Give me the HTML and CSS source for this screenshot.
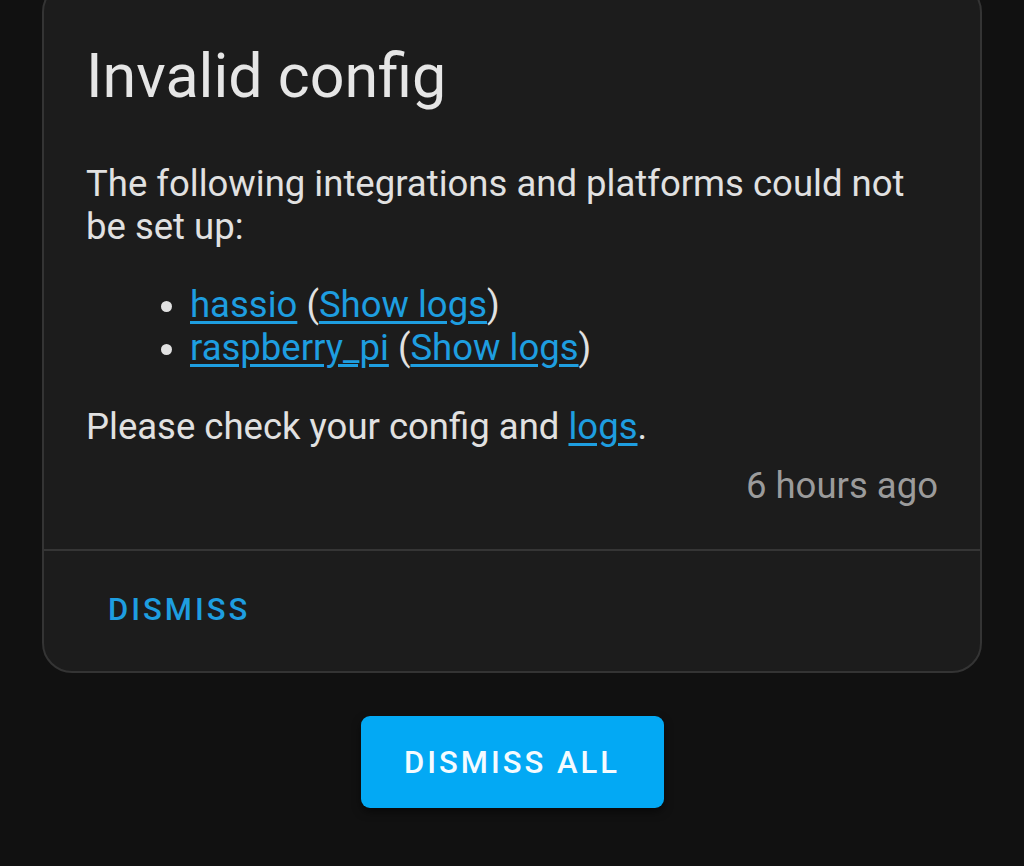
FILE: index.html
```html
<!DOCTYPE html>
<html>
<head>
<meta charset="utf-8">
<link rel="stylesheet" href="styles.css">
</head>
<body>
<div class="page">
  <div class="card">
    <div class="content">
      <h1 class="title">Invalid config</h1>
      <p class="text">The following integrations and platforms could not be set up:</p>
      <ul class="list">
        <li><a href="#">hassio</a> (<a href="#">Show logs</a>)</li>
        <li><a href="#">raspberry_pi</a> (<a href="#">Show logs</a>)</li>
      </ul>
      <p class="text">Please check your config and <a href="#">logs</a>.</p>
      <div class="time">6 hours ago</div>
    </div>
    <div class="actions">
      <button class="text-btn">DISMISS</button>
    </div>
  </div>
  <div class="bottom">
    <button class="primary-btn">DISMISS ALL</button>
  </div>
</div>
</body>
</html>
```
FILE: styles.css
```css
html, body {
  margin: 0;
  padding: 0;
  background: #111111;
  font-family: Roboto, "Noto Sans", sans-serif;
  height: 100%;
  overflow: hidden;
}
.page {
  padding: 0 42px;
}
.card {
  margin-top: -18px;
  background: #1c1c1c;
  border: 2px solid #343434;
  border-radius: 30px;
}
.content {
  padding: 44px 42px 42px 42px;
  color: #e1e1e1;
}
.title {
  margin: 0;
  font-size: 61px;
  font-weight: 400;
  line-height: 96px;
  color: #e6e6e6;
}
.text {
  margin: 0;
  font-size: 36.5px;
  line-height: 43px;
}
.title + .text {
  margin-top: 38px;
}
.list {
  margin: 35px 0 36px 0;
  padding-left: 104px;
  font-size: 36.5px;
  line-height: 43px;
}
a {
  color: #1e9ee0;
  text-decoration: underline;
  text-underline-offset: 4px;
}
.time {
  margin-top: 16px;
  text-align: right;
  font-size: 36.5px;
  line-height: 43px;
  color: #9b9b9b;
}
.actions {
  border-top: 2px solid #353535;
  padding: 35px 42px 37px;
}
.text-btn {
  background: none;
  border: none;
  padding: 0 22px;
  font-family: Roboto, sans-serif;
  font-weight: 500;
  font-size: 31px;
  letter-spacing: 3px;
  color: #1e9ee0;
  line-height: 48px;
}
.bottom {
  display: flex;
  justify-content: center;
  padding-top: 43px;
}
.primary-btn {
  background: #03a9f4;
  color: #f4fbff;
  border: none;
  border-radius: 9px;
  width: 303px;
  height: 92px;
  font-family: Roboto, sans-serif;
  font-weight: 500;
  font-size: 31px;
  letter-spacing: 3px;
  box-shadow: 0 4px 8px rgba(0,0,0,0.5);
}
```
